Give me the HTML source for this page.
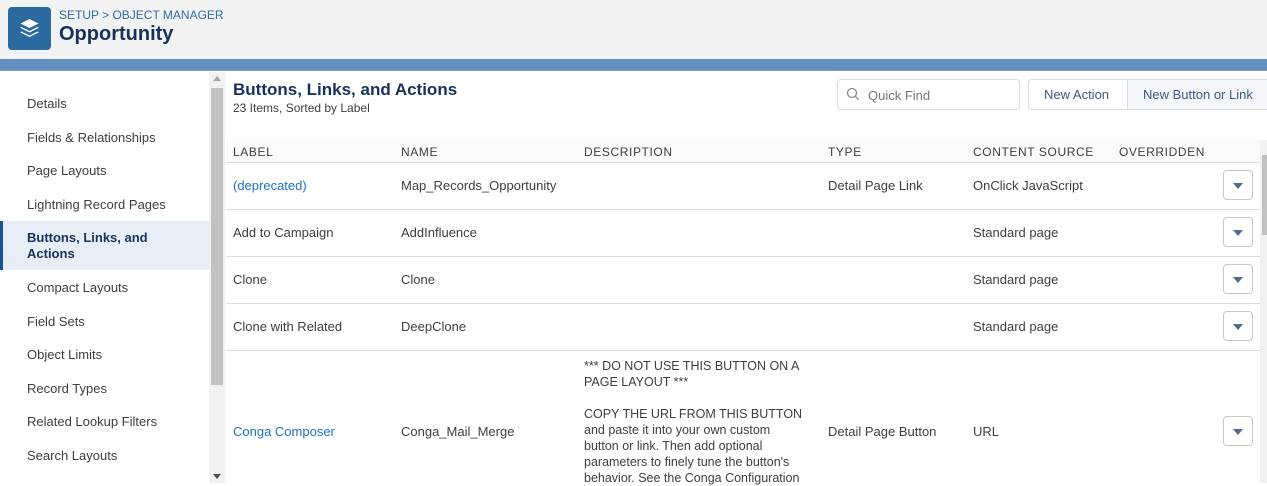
<!DOCTYPE html>
<html><head><style>
*{margin:0;padding:0;box-sizing:border-box}
body{width:1267px;height:483px;overflow:hidden;font-family:"Liberation Sans",sans-serif;background:#fff;position:relative;color:#3e3e3c}
.a{position:absolute}
.hdr{left:0;top:0;width:1267px;height:59px;background:#f3f2f2}
.band{left:0;top:59px;width:1267px;height:12px;background:#6390c0;border-bottom:1px solid #7ea0c9}
.logo{left:8px;top:7px;width:43px;height:43px;background:#2a6a9e;border-radius:4px}
.side div{position:absolute;left:27px;font-size:13px;color:#3e3e3c}
.sel{left:0;top:221px;width:209px;height:49px;background:#e8eef8;border-left:3px solid #1b5297}
.th{font-size:12px;letter-spacing:0.6px;color:#3e3e3c;top:145px}
.row{left:226px;width:1034px;border-bottom:1px solid #dddbda}
.c{position:absolute;font-size:13px;color:#3e3e3c}
.l{color:#1b72c4}
.dd{position:absolute;left:1223px;width:30px;height:30px;border:1px solid #c9c7c5;border-radius:4px;background:#fff}
.dd:after{content:"";position:absolute;left:9px;top:12px;border-left:5px solid transparent;border-right:5px solid transparent;border-top:6px solid #54698d}
</style></head><body>
<div class="a hdr"></div>
<div class="a band"></div>
<div class="a logo"><svg width="43" height="43" viewBox="0 0 43 43"><g fill="#fff"><path d="M21.5 12l9 4.5-9 4.5-9-4.5z"/><path d="M13.5 20l8 4 8-4 1.5.8-9.5 4.7-9.5-4.7z"/><path d="M13.5 24.5l8 4 8-4 1.5.8-9.5 4.7-9.5-4.7z"/></g></svg></div>
<div class="a" style="left:59px;top:8px;font-size:12px;color:#2f6aa8">SETUP &gt; OBJECT MANAGER</div>
<div class="a" style="left:59px;top:23px;font-size:20px;font-weight:bold;color:#16325c">Opportunity</div>
<div class="a sel"></div>
<div class="side">
<div style="top:96px">Details</div>
<div style="top:130px">Fields &amp; Relationships</div>
<div style="top:163px">Page Layouts</div>
<div style="top:197px">Lightning Record Pages</div>
<div style="top:230px;font-weight:bold;color:#16325c;line-height:16px">Buttons, Links, and<br>Actions</div>
<div style="top:280px">Compact Layouts</div>
<div style="top:314px">Field Sets</div>
<div style="top:347px">Object Limits</div>
<div style="top:381px">Record Types</div>
<div style="top:414px">Related Lookup Filters</div>
<div style="top:448px">Search Layouts</div>
</div>
<div class="a" style="left:209px;top:72px;width:16px;height:411px;background:#f1f1f1"></div>
<div class="a" style="left:211px;top:88px;width:12px;height:297px;background:#c1c1c1"></div>
<div class="a" style="left:213px;top:76px;border-left:4px solid transparent;border-right:4px solid transparent;border-bottom:5px solid #a3a3a3"></div>
<div class="a" style="left:213px;top:474px;border-left:4px solid transparent;border-right:4px solid transparent;border-top:5px solid #505050"></div>
<div class="a" style="left:233px;top:80px;font-size:17px;font-weight:bold;color:#16325c">Buttons, Links, and Actions</div>
<div class="a" style="left:233px;top:101px;font-size:12px;color:#3e3e3c">23 Items, Sorted by Label</div>
<div class="a" style="left:837px;top:79px;width:183px;height:31px;border:1px solid #d8dde6;border-radius:4px"></div>
<svg class="a" style="left:846px;top:87px" width="14" height="14" viewBox="0 0 14 14"><circle cx="6" cy="6" r="4.5" fill="none" stroke="#8a8a8a" stroke-width="1.3"/><path d="M9.3 9.3l3.5 3.5" stroke="#8a8a8a" stroke-width="1.3"/></svg>
<div class="a" style="left:868px;top:88px;font-size:13px;color:#777">Quick Find</div>
<div class="a" style="left:1028px;top:79px;width:239px;height:31px;border:1px solid #d8dde6;border-radius:4px 0 0 4px;background:#fff"></div>
<div class="a" style="left:1127px;top:80px;width:140px;height:29px;background:#f4f6f9;border-left:1px solid #d8dde6"></div>
<div class="a" style="left:1044px;top:87px;font-size:13px;color:#3c5a85">New Action</div>
<div class="a" style="left:1143px;top:87px;font-size:13px;color:#3c5a85">New Button or Link</div>
<div class="a" style="left:226px;top:140px;width:1034px;height:23px;background:#fafaf9;border-bottom:1px solid #dddbda"></div>
<div class="a th" style="left:233px">LABEL</div>
<div class="a th" style="left:401px">NAME</div>
<div class="a th" style="left:584px">DESCRIPTION</div>
<div class="a th" style="left:828px">TYPE</div>
<div class="a th" style="left:973px">CONTENT SOURCE</div>
<div class="a th" style="left:1119px">OVERRIDDEN</div>
<div class="a row" style="top:163px;height:47px"><span class="c l" style="left:7px;top:15px">(deprecated)</span><span class="c" style="left:175px;top:15px">Map_Records_Opportunity</span><span class="c" style="left:602px;top:15px">Detail Page Link</span><span class="c" style="left:747px;top:15px">OnClick JavaScript</span></div>
<div class="a row" style="top:210px;height:47px"><span class="c" style="left:7px;top:15px">Add to Campaign</span><span class="c" style="left:175px;top:15px">AddInfluence</span><span class="c" style="left:747px;top:15px">Standard page</span></div>
<div class="a row" style="top:257px;height:47px"><span class="c" style="left:7px;top:15px">Clone</span><span class="c" style="left:175px;top:15px">Clone</span><span class="c" style="left:747px;top:15px">Standard page</span></div>
<div class="a row" style="top:304px;height:47px"><span class="c" style="left:7px;top:15px">Clone with Related</span><span class="c" style="left:175px;top:15px">DeepClone</span><span class="c" style="left:747px;top:15px">Standard page</span></div>
<div class="c l" style="left:233px;top:424px">Conga Composer</div>
<div class="c" style="left:401px;top:424px">Conga_Mail_Merge</div>
<div class="c" style="left:828px;top:424px">Detail Page Button</div>
<div class="c" style="left:973px;top:424px">URL</div>
<div class="c" style="left:584px;top:358px;line-height:16px;font-size:12.5px;white-space:nowrap">*** DO NOT USE THIS BUTTON ON A<br>PAGE LAYOUT ***<br><br>COPY THE URL FROM THIS BUTTON<br>and paste it into your own custom<br>button or link. Then add optional<br>parameters to finely tune the button's<br>behavior. See the Conga Configuration</div>
<div class="dd" style="top:170px"></div>
<div class="dd" style="top:217px"></div>
<div class="dd" style="top:264px"></div>
<div class="dd" style="top:311px"></div>
<div class="dd" style="top:416px"></div>
<div class="a" style="left:1260px;top:140px;width:7px;height:343px;background:#f1f1f1"></div>
<div class="a" style="left:1262px;top:155px;width:5px;height:80px;background:#c1c1c1"></div>
</body></html>
